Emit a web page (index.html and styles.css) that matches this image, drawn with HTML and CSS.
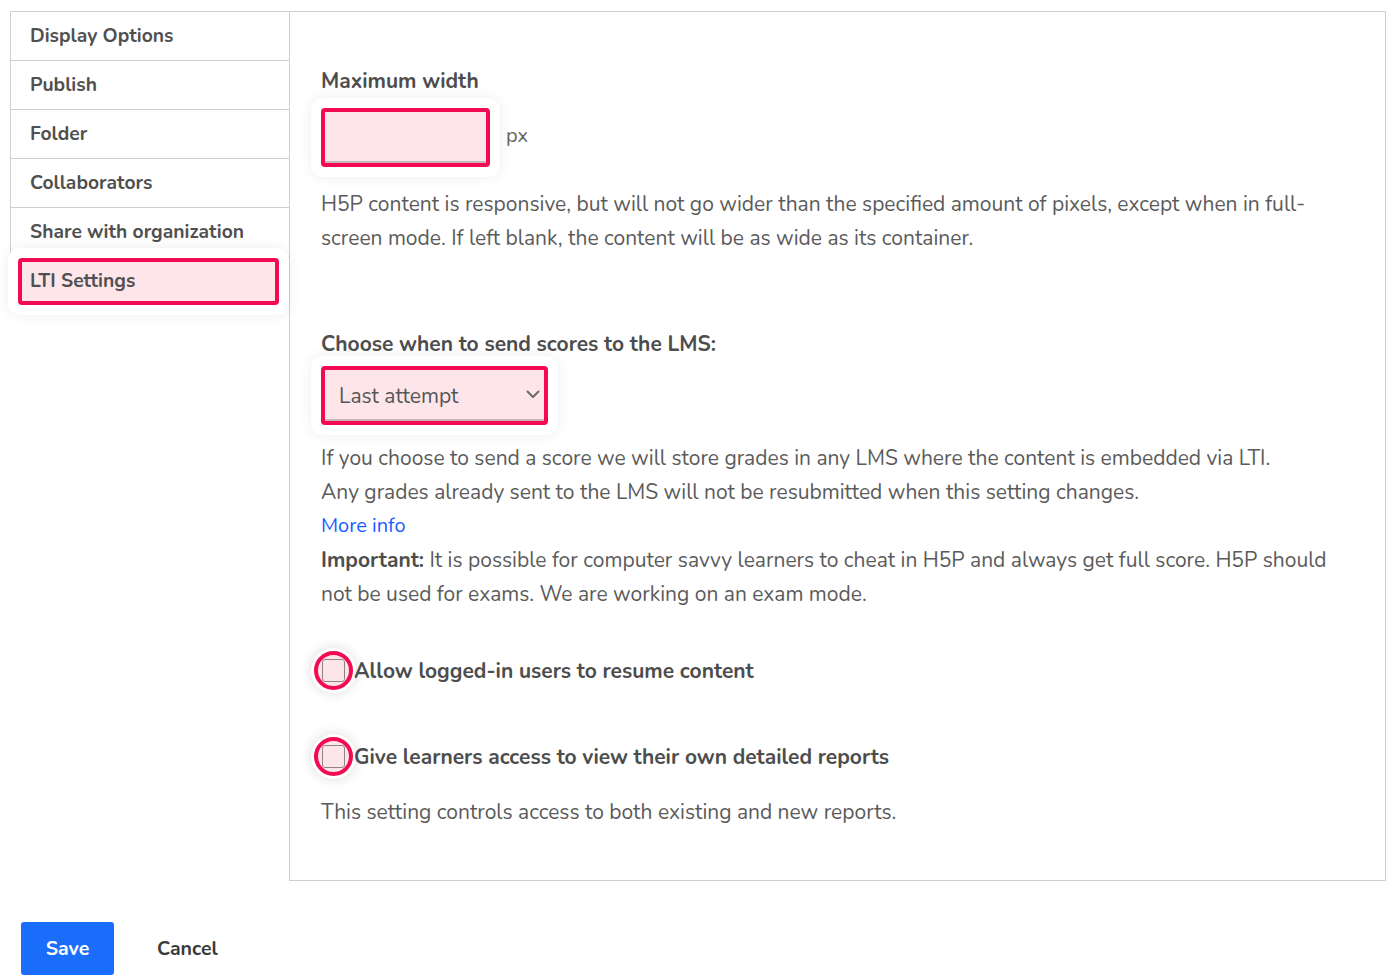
FILE: index.html
```html
<!DOCTYPE html>
<html lang="en">
<head>
<meta charset="utf-8">
<title>LTI Settings</title>
<link rel="stylesheet" href="styles.css">
</head>
<body>
<div class="page">
  <div class="editor">
    <nav class="sidebar">
      <div class="nav-item">Display Options</div>
      <div class="nav-item">Publish</div>
      <div class="nav-item">Folder</div>
      <div class="nav-item">Collaborators</div>
      <div class="nav-item">Share with organization</div>
      <div class="nav-item active">LTI Settings</div>
    </nav>
    <section class="panel">
      <div class="field">
        <div class="label">Maximum width</div>
        <div class="input-row">
          <span class="input focus"></span>
          <span class="unit">px</span>
        </div>
        <p class="desc">H5P content is responsive, but will not go wider than the specified amount of pixels, except when in full-screen mode. If left blank, the content will be as wide as its container.</p>
      </div>
      <div class="field field-scores">
        <div class="label">Choose when to send scores to the LMS:</div>
        <div class="select focus">
          <span>Last attempt</span>
          <svg class="chev" width="14" height="9" viewBox="0 0 14 9"><path d="M1.5 1.5 L7 7 L12.5 1.5" fill="none" stroke="#6b6b6b" stroke-width="2" stroke-linecap="round" stroke-linejoin="round"/></svg>
        </div>
        <p class="desc">If you choose to send a score we will store grades in any LMS where the content is embedded via LTI.<br>Any grades already sent to the LMS will not be resubmitted when this setting changes.<br><a class="link" href="#">More info</a><br><strong>Important:</strong> It is possible for computer savvy learners to cheat in H5P and always get full score. H5P should not be used for exams. We are working on an exam mode.</p>
      </div>
      <div class="check-row first">
        <span class="ring"><span class="box"></span></span>
        <span class="check-label">Allow logged-in users to resume content</span>
      </div>
      <div class="check-row second">
        <span class="ring"><span class="box"></span></span>
        <span class="check-label">Give learners access to view their own detailed reports</span>
      </div>
      <p class="desc note">This setting controls access to both existing and new reports.</p>
    </section>
  </div>
  <div class="actions">
    <button class="btn-save">Save</button>
    <button class="btn-cancel">Cancel</button>
  </div>
</div>
</body>
</html>
```
FILE: styles.css
```css
* { box-sizing: border-box; }
body {
  margin: 0;
  background: #fff;
  font-family: "Nunito", "Lato", "Open Sans", sans-serif;
  color: #555;
}
.page {
  padding: 11px 7px 0 10px;
}
.editor {
  display: flex;
  align-items: flex-start;
}
.sidebar {
  width: 279px;
  flex: none;
  border-left: 1px solid #cfcfcf;
  border-top: 1px solid #cfcfcf;
}
.nav-item {
  height: 49px;
  display: flex;
  align-items: center;
  padding: 0 0 2px 19px;
  border-bottom: 1px solid #cfcfcf;
  font-size: 19.3px;
  font-weight: 700;
  color: #505050;
}
.nav-item.active {
  position: relative;
  isolation: isolate;
}
.nav-item.active::before {
  content: "";
  position: absolute;
  top: 1px;
  bottom: 0;
  left: 7px;
  right: 10px;
  z-index: -1;
  border: 4px solid #f20a52;
  border-radius: 4px;
  background: #fde5ea;
  box-shadow: 0 0 0 10px #fff, 0 0 14px 10px rgba(0, 0, 0, 0.07);
}
.panel {
  flex: 1;
  height: 870px;
  border: 1px solid #cfcfcf;
  padding: 56px 30px 0 31px;
}
.label {
  font-size: 21px;
  font-weight: 700;
  line-height: 26px;
  color: #4d4d4d;
}
.input-row {
  display: flex;
  align-items: center;
  gap: 16px;
  margin-top: 14px;
}
.focus {
  border: 4px solid #f20a52;
  border-radius: 4px;
  background: #fde5ea;
  box-shadow: inset 0 -2px 0 #c9b4ba, 0 0 0 10px #fff, 0 0 14px 10px rgba(0, 0, 0, 0.07);
}
.input {
  display: block;
  width: 169px;
  height: 59px;
}
.unit {
  font-size: 20px;
  color: #666;
  margin-top: -5px;
}
.desc {
  margin: 20px 0 0;
  font-size: 21px;
  line-height: 34px;
  color: #5b5b5b;
}
.desc strong { color: #4d4d4d; }
.link {
  color: #1a5cff;
  text-decoration: none;
  font-size: 20px;
  line-height: 34px;
  vertical-align: top;
}
.field-scores { margin-top: 76px; }
.select {
  margin-top: 9px;
  width: 227px;
  height: 59px;
  display: flex;
  align-items: center;
  justify-content: space-between;
  padding: 0 4px 0 14px;
  font-size: 21px;
  color: #555;
}
.chev { margin-top: -2px; }
.field-scores .desc { margin-top: 16px; }
.check-row {
  display: flex;
  align-items: center;
  margin-left: -7px;
}
.check-row.first { margin-top: 40px; }
.check-row.second { margin-top: 47px; }
.ring {
  width: 39px;
  height: 39px;
  flex: none;
  border-radius: 50%;
  border: 4px solid #f20a52;
  background: #fde5ea;
  box-shadow: 0 0 0 3px #fff, 0 0 12px 4px rgba(0, 0, 0, 0.12);
  display: flex;
  align-items: center;
  justify-content: center;
}
.box {
  width: 23px;
  height: 23px;
  border: 1.5px solid #8f8388;
  border-radius: 3px;
  background: #fde5ea;
}
.check-label {
  font-size: 21px;
  font-weight: 700;
  color: #4d4d4d;
  margin-left: 1px;
}
.note { margin-top: 19px; }
.actions {
  display: flex;
  align-items: center;
  gap: 43px;
  padding-left: 11px;
  margin-top: 41px;
}
.btn-save {
  width: 93px;
  height: 53px;
  border: none;
  border-radius: 3px;
  background: #1a6efb;
  color: #fff;
  font-family: inherit;
  font-size: 19.5px;
  font-weight: 700;
}
.btn-cancel {
  border: none;
  background: none;
  padding: 0;
  font-family: inherit;
  font-size: 19.5px;
  font-weight: 700;
  color: #3a3a3a;
}
```
